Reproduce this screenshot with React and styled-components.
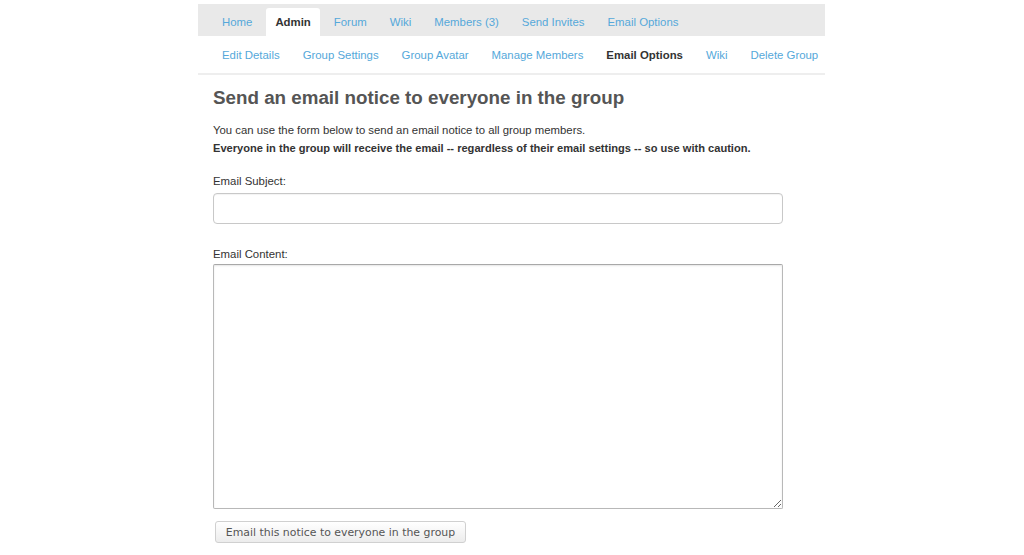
import React from "react";
import styled, { createGlobalStyle } from "styled-components";

const Global = createGlobalStyle`
  html, body { margin: 0; padding: 0; background: #fff; }
  body { font-family: "Liberation Sans", Arial, sans-serif; color: #444; }
`;

const Wrapper = styled.div`
  width: 627px;
  margin: 4px 0 0 198px;
`;

const NavList = styled.ul`
  list-style: none;
  margin: 0;
  padding: 0 0 0 15px;
  display: flex;
  align-items: ${(p) => (p.$primary ? "flex-end" : "center")};
  height: ${(p) => (p.$primary ? "32px" : "37px")};
  background: ${(p) => (p.$primary ? "#e9e9e9" : "#fff")};
  border-bottom: ${(p) => (p.$primary ? "none" : "2px solid #eeeeee")};
`;

const NavItem = styled.li`
  margin-right: 5px;
  padding: 0 9px;
  height: 28px;
  line-height: 28px;
  font-size: 11.4px;
  white-space: nowrap;
  border-radius: 3px 3px 0 0;
  background: ${(p) => (p.$active && p.$tab ? "#fff" : "transparent")};
  color: ${(p) => (p.$active ? "#333" : "#55a8da")};
  font-weight: ${(p) => (p.$active ? "bold" : "normal")};
`;

const Content = styled.div`
  padding: 0 15px;
`;

const Title = styled.h2`
  margin: 11px 0 11px;
  font-size: 18.8px;
  line-height: 24px;
  color: #555;
  font-weight: bold;
`;

const Para = styled.p`
  margin: 0;
  font-size: ${(p) => (p.$bold ? "11.1px" : "11.35px")};
  line-height: 18px;
  color: #333;
  font-weight: ${(p) => (p.$bold ? "bold" : "normal")};
`;

const Label = styled.label`
  display: block;
  font-size: 11.4px;
  line-height: 18px;
  color: #333;
  margin: ${(p) => p.$mt} 0 ${(p) => p.$mb};
`;

const Input = styled.input`
  display: block;
  box-sizing: border-box;
  width: 570px;
  height: 31px;
  border: 1px solid #c8c8c8;
  border-radius: 4px;
  background: #fff;
  box-shadow: inset 0 1px 1px rgba(0, 0, 0, 0.05);
  margin: 0;
  outline: none;
`;

const TextArea = styled.textarea`
  display: block;
  box-sizing: border-box;
  width: 570px;
  height: 245px;
  border: 1px solid #b8b8b8;
  border-top-color: #a8a8a8;
  border-radius: 2px;
  background: #fff;
  box-shadow: inset 0 1px 2px rgba(0, 0, 0, 0.1);
  margin: 0;
  resize: vertical;
  outline: none;
`;

const Button = styled.button`
  display: block;
  margin: 12px 0 0 2px;
  height: 22px;
  width: 251px;
  padding: 0;
  font-family: "DejaVu Sans", "Liberation Sans", sans-serif;
  font-size: 10.9px;
  color: #555;
  border: 1px solid #d0d0d0;
  border-radius: 3px;
  background: linear-gradient(#ffffff, #ececec);
`;

const top = ["Home", "Admin", "Forum", "Wiki", "Members (3)", "Send Invites", "Email Options"];
const sub = ["Edit Details", "Group Settings", "Group Avatar", "Manage Members", "Email Options", "Wiki", "Delete Group"];

export default function App() {
  return (
    <Wrapper>
      <Global />
      <NavList $primary>
        {top.map((t) => (
          <NavItem key={t} $tab $active={t === "Admin"}>{t}</NavItem>
        ))}
      </NavList>
      <NavList>
        {sub.map((t) => (
          <NavItem key={t} $active={t === "Email Options"}>{t}</NavItem>
        ))}
      </NavList>
      <Content>
        <Title>Send an email notice to everyone in the group</Title>
        <Para>You can use the form below to send an email notice to all group members.</Para>
        <Para $bold>Everyone in the group will receive the email -- regardless of their email settings -- so use with caution.</Para>
        <Label $mt="15px" $mb="3px">Email Subject:</Label>
        <Input type="text" />
        <Label $mt="21px" $mb="1px">Email Content:</Label>
        <TextArea />
        <Button>Email this notice to everyone in the group</Button>
      </Content>
    </Wrapper>
  );
}
